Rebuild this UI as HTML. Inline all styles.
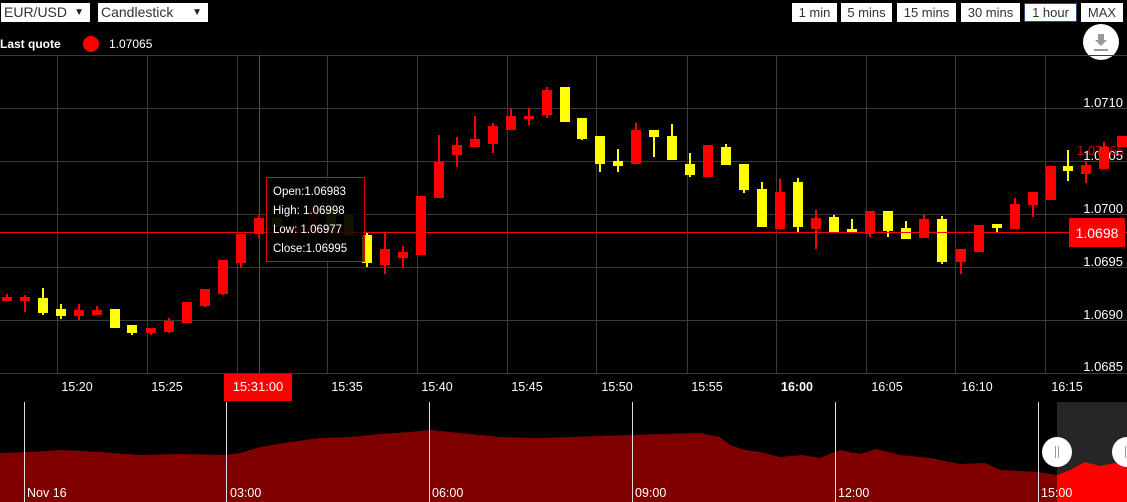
<!DOCTYPE html>
<html><head><meta charset="utf-8"><style>
*{margin:0;padding:0;box-sizing:border-box}
body{width:1127px;height:502px;background:#000;overflow:hidden;font-family:"Liberation Sans",sans-serif;position:relative}
.sel{position:absolute;top:3px;height:19px;background:#fff;color:#333;font-size:14px;line-height:19px;padding-left:3px}
.sel span{position:absolute;right:6px;top:0;font-size:10px;color:#222}
.btn{position:absolute;top:3px;height:19px;background:#fff;color:#333;font-size:13px;line-height:19px;text-align:center}
</style></head><body>
<div class="sel" style="left:1px;width:89px">EUR/USD<span>▼</span></div>
<div class="sel" style="left:98px;width:110px">Candlestick<span>▼</span></div>
<div class="btn" style="left:792px;width:45px">1 min</div>
<div class="btn" style="left:841px;width:51px">5 mins</div>
<div class="btn" style="left:897px;width:59px">15 mins</div>
<div class="btn" style="left:961px;width:59px">30 mins</div>
<div class="btn" style="left:1024px;width:53px;border:1px solid #2a4a80;line-height:17px">1 hour</div>
<div class="btn" style="left:1081px;width:42px">MAX</div>
<svg width="1127" height="502" style="position:absolute;left:0;top:0" font-family="Liberation Sans, sans-serif">
<text x="0" y="48" fill="#fff" font-size="12" font-weight="bold">Last quote</text>
<circle cx="91" cy="44" r="8" fill="#f00"/>
<text x="109" y="48" fill="#fff" font-size="12">1.07065</text>
<circle cx="1101" cy="42" r="18" fill="#fff"/>
<path d="M1098 34h6v6h3l-6 6-6-6h3z M1094 49h14v2h-14z" fill="#999"/>
<g stroke="#3a3a3a" stroke-width="1">
<line x1="0" y1="55.5" x2="1127" y2="55.5"/>
<line x1="0" y1="108.5" x2="1127" y2="108.5"/><line x1="0" y1="161.5" x2="1127" y2="161.5"/>
<line x1="0" y1="214.5" x2="1127" y2="214.5"/><line x1="0" y1="267.5" x2="1127" y2="267.5"/>
<line x1="0" y1="320.5" x2="1127" y2="320.5"/><line x1="0" y1="373.5" x2="1127" y2="373.5"/>
<line x1="57.5" y1="55" x2="57.5" y2="373"/><line x1="147.5" y1="55" x2="147.5" y2="373"/>
<line x1="237.5" y1="55" x2="237.5" y2="373"/><line x1="327.5" y1="55" x2="327.5" y2="373"/>
<line x1="417.5" y1="55" x2="417.5" y2="373"/><line x1="507.5" y1="55" x2="507.5" y2="373"/>
<line x1="596.5" y1="55" x2="596.5" y2="373"/><line x1="687.5" y1="55" x2="687.5" y2="373"/>
<line x1="776.5" y1="55" x2="776.5" y2="373"/><line x1="866.5" y1="55" x2="866.5" y2="373"/>
<line x1="955.5" y1="55" x2="955.5" y2="373"/><line x1="1045.5" y1="55" x2="1045.5" y2="373"/>
</g>
<g fill="#fff" font-size="13" text-anchor="end">
<text x="1123" y="107">1.0710</text><text x="1123" y="160">1.0705</text>
<text x="1123" y="213">1.0700</text><text x="1123" y="266">1.0695</text>
<text x="1123" y="319">1.0690</text><text x="1123" y="371">1.0685</text>
</g>
<text x="1077" y="155" fill="#d00" font-size="13">1.07065</text>
<g id="c"></g>
<line x1="0" y1="232.5" x2="1127" y2="232.5" stroke="#f00"/>
<line x1="259.5" y1="55" x2="259.5" y2="373" stroke="#f00"/>
<rect x="1069" y="218" width="56" height="29" fill="#f00"/>
<text x="1097" y="238" fill="#fff" font-size="14" text-anchor="middle">1.0698</text>
<rect x="266.5" y="177.5" width="98" height="84" fill="rgba(0,0,0,0.75)" stroke="#e00"/>
<g fill="#fff" font-size="11.5"><text x="273" y="195">Open:1.06983</text><text x="273" y="214">High:  1.06998</text><text x="273" y="233">Low:   1.06977</text><text x="273" y="252">Close:1.06995</text></g>
<g fill="#fff" font-size="12.5" text-anchor="middle">
<text x="77" y="391">15:20</text><text x="167" y="391">15:25</text><text x="347" y="391">15:35</text>
<text x="437" y="391">15:40</text><text x="527" y="391">15:45</text><text x="617" y="391">15:50</text>
<text x="707" y="391">15:55</text><text x="797" y="391" font-weight="bold">16:00</text><text x="887" y="391">16:05</text>
<text x="977" y="391">16:10</text><text x="1067" y="391">16:15</text></g>
<rect x="224" y="374" width="68" height="27" fill="#f00"/>
<text x="258" y="391" fill="#fff" font-size="13" text-anchor="middle">15:31:00</text>
<rect x="1057" y="402" width="70" height="100" fill="#262626"/>
<path d="M0 453 L30 452 L60 450 L100 452 L140 455 L180 454 L226 455 L240 453 L260 447 L290 442 L320 438 L350 437 L380 434 L410 432 L430 430 L460 433 L500 437 L540 438 L600 436 L632 435 L660 434 L700 433 L720 437 L730 445 L745 450 L760 452 L780 457 L802 455 L820 458 L840 450 L860 454 L876 449 L900 455 L930 458 L960 464 L985 463 L1000 470 L1038 472 L1057 475 L1057 502 L0 502Z" fill="#800000"/>
<path d="M1057 475 L1070 470 L1085 462 L1100 466 L1115 463 L1127 466 L1127 502 L1057 502Z" fill="#f00"/>
<g stroke="#ddd" stroke-width="1"><line x1="24.5" y1="402" x2="24.5" y2="502"/><line x1="226.5" y1="402" x2="226.5" y2="502"/><line x1="429.5" y1="402" x2="429.5" y2="502"/><line x1="632.5" y1="402" x2="632.5" y2="502"/><line x1="835.5" y1="402" x2="835.5" y2="502"/><line x1="1038.5" y1="402" x2="1038.5" y2="502"/></g>
<g fill="#fff" font-size="12.5"><text x="27" y="497">Nov 16</text><text x="230" y="497">03:00</text><text x="432" y="497">06:00</text><text x="635" y="497">09:00</text><text x="838" y="497">12:00</text><text x="1041" y="497">15:00</text></g>
<circle cx="1057" cy="452" r="15" fill="#fff"/><circle cx="1127" cy="452" r="15" fill="#fff"/>
<g stroke="#999"><line x1="1055.5" y1="446" x2="1055.5" y2="458"/><line x1="1058.5" y1="446" x2="1058.5" y2="458"/><line x1="1125.5" y1="446" x2="1125.5" y2="458"/></g>
</svg>
<script>
var d=[[7,'r',297,301,294,301],[25,'r',297,301,295,312],[43,'y',298,313,288,315],[61,'y',309,316,304,319],[79,'r',310,316,304,320],[97,'r',310,315,306,315],[115,'y',309,328,309,328],[132,'y',325,333,325,335],[151,'r',328,333,328,335],[169,'r',321,332,318,333],[187,'r',302,323,302,323],[205,'r',289,306,289,307],[223,'r',260,294,260,295],[241,'r',234,263,234,268],[259,'r',218,234,215,238],[277,'d',218,227,216,227],[295,'e',227,236,218,236],[313,'e',208,232,195,232],[331,'d',208,232,198,232],[349,'d',214,236,214,236],[367,'y',235,263,232,267],[385,'r',249,265,233,274],[403,'r',252,258,246,267],[421,'r',196,255,196,255],[439,'r',162,198,135,198],[457,'r',145,155,137,167],[475,'r',139,147,116,147],[493,'r',126,144,123,153],[511,'r',116,130,109,130],[529,'r',116,119,108,125],[547,'r',90,115,87,118],[565,'y',87,122,87,122],[582,'y',118,139,118,140],[600,'y',136,164,136,172],[618,'y',161,166,149,172],[636,'r',130,164,123,164],[654,'y',130,137,130,157],[672,'y',136,160,124,160],[690,'y',164,175,153,177],[708,'r',145,177,145,177],[726,'y',147,165,144,165],[744,'y',164,190,164,193],[762,'y',189,227,182,227],[780,'r',192,229,179,229],[798,'y',182,227,178,232],[816,'r',218,229,210,249],[834,'y',217,232,215,232],[852,'y',229,232,219,232],[870,'r',211,234,211,237],[888,'y',211,231,211,237],[906,'y',228,239,221,239],[924,'r',219,238,215,238],[942,'y',219,262,216,264],[961,'r',249,262,249,274],[979,'r',225,252,225,252],[997,'y',224,228,224,232],[1015,'r',204,229,198,229],[1033,'r',192,205,192,217],[1051,'r',166,200,166,200],[1068,'y',166,171,150,181],[1086,'r',165,174,161,183],[1104,'r',147,169,142,169],[1122,'r',136,147,136,147]];
var col={r:'#f00',y:'#ff0',d:'#4a4a00',e:'#4a0000'},s='';
d.forEach(function(c){var f=col[c[1]];s+='<rect x="'+(c[0]-1)+'" y="'+c[4]+'" width="2" height="'+(c[5]-c[4])+'" fill="'+f+'"/><rect x="'+(c[0]-5)+'" y="'+c[2]+'" width="10" height="'+Math.max(3,c[3]-c[2])+'" fill="'+f+'"/>';});
document.getElementById('c').innerHTML=s;
</script>
</body></html>
